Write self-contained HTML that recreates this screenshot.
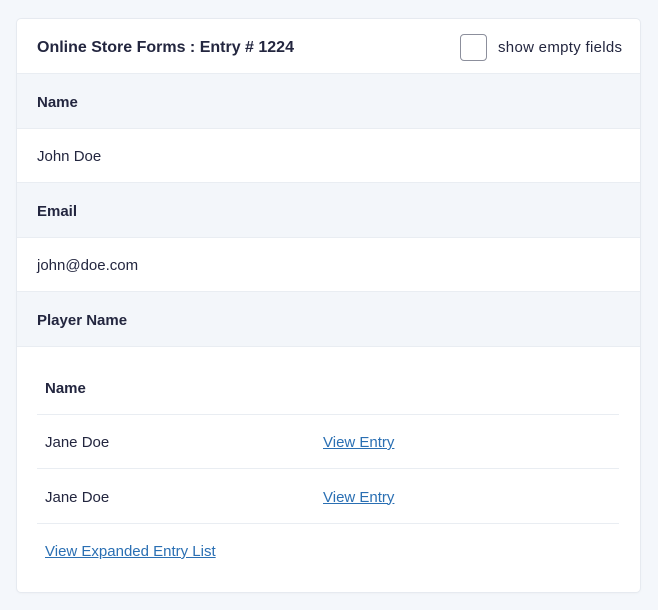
<!DOCTYPE html>
<html><head><style>
body{margin:0;background:#f4f7fb;font-family:"Liberation Sans",sans-serif;color:#23263f;font-size:15px;width:658px;height:610px;overflow:hidden;position:relative}
.card{position:absolute;left:17px;top:19px;width:623px;height:573px;background:#fff;border-radius:4px;box-shadow:0 0 0 1px #e6eaf0,0 1px 3px rgba(0,0,0,.05)}
.row{position:absolute;left:0;width:623px;box-sizing:border-box;padding-left:20px;display:flex;align-items:center;border-bottom:1px solid #e9edf2}
.lab{background:#f3f6fa;font-weight:bold}
a{color:#2a6fb3;text-decoration:underline}
.cb{position:absolute;left:443px;top:15px;width:27px;height:27px;border:1px solid #8c8f9c;border-radius:4px;box-sizing:border-box}
.in{position:absolute;left:20px;width:582px;border-bottom:1px solid #e9edf2;display:flex;align-items:center;box-sizing:border-box;padding-left:8px}
</style></head><body>
<div class="card">
<div class="row" style="top:0;height:55px;font-weight:bold;font-size:16px;padding-top:3px">Online Store Forms : Entry # 1224</div>
<div class="cb"></div><div style="position:absolute;left:481px;top:20px;font-size:15px;letter-spacing:0.3px">show empty fields</div>
<div class="row lab" style="top:55px;height:55px;padding-top:2px">Name</div>
<div class="row" style="top:110px;height:54px;padding-top:2px">John Doe</div>
<div class="row lab" style="top:164px;height:55px;padding-top:2px">Email</div>
<div class="row" style="top:219px;height:54px;padding-top:2px">john@doe.com</div>
<div class="row lab" style="top:273px;height:55px;padding-top:2px">Player Name</div>
<div class="in" style="top:341px;height:55px;font-weight:bold;padding-top:2px">Name</div>
<div class="in" style="top:396px;height:54px;padding-top:2px">Jane Doe<a style="position:absolute;left:286px" href="#">View Entry</a></div>
<div class="in" style="top:450px;height:55px;padding-top:2px">Jane Doe<a style="position:absolute;left:286px" href="#">View Entry</a></div>
<div style="position:absolute;left:28px;top:524px"><a href="#">View Expanded Entry List</a></div>
</div>
</body></html>
